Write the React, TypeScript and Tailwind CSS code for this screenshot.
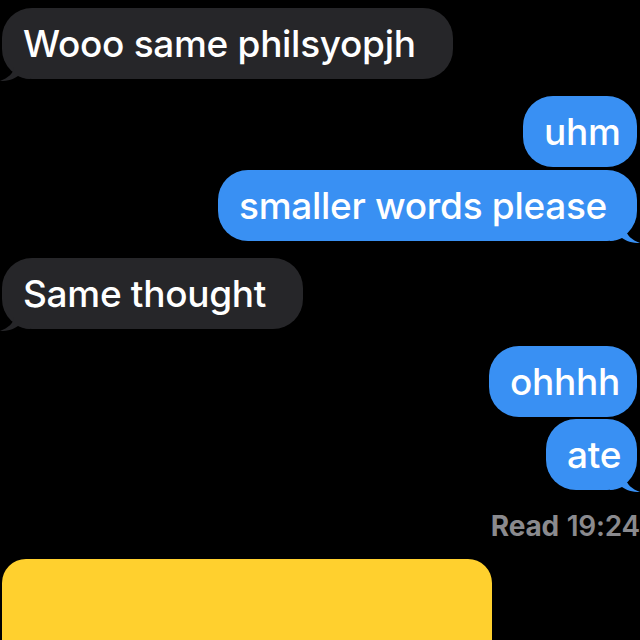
import React from "react";

const font = { fontFamily: "Inter, 'Liberation Sans', sans-serif" };

function LeftTail() {
  return (
    <svg className="absolute left-[-2px] bottom-[-2px]" width="30" height="24" viewBox="0 0 30 24">
      <path d="M14 0 L14 10 C14 16 8 21 0 24 C8 24 14 22 18 19 C22 21 26 22 30 22 L30 0 Z" fill="#262629" />
    </svg>
  );
}

function RightTail() {
  return (
    <svg className="absolute right-[-3px] bottom-[-2px]" width="30" height="24" viewBox="0 0 30 24">
      <path d="M16 0 L16 10 C16 16 22 21 30 24 C22 24 16 22 12 19 C8 21 4 22 0 22 L0 0 Z" fill="#3990f3" />
    </svg>
  );
}

function Gray({ text, w, mt }: { text: string; w: string; mt: string }) {
  return (
    <div className={`relative shrink-0 self-start ml-[2px] ${mt} ${w} h-[71px] rounded-[30px] bg-[#262629] flex items-center pl-[21px]`}>
      <LeftTail />
      <span className="relative text-white text-[37px] font-medium leading-none tracking-[-0.3px]">{text}</span>
    </div>
  );
}

function Blue({ text, w, mt, tail }: { text: string; w: string; mt: string; tail?: boolean }) {
  return (
    <div className={`relative shrink-0 self-end mr-[3px] ${mt} ${w} h-[71px] rounded-[30px] bg-[#3990f3] flex items-center pl-[21px]`}>
      {tail && <RightTail />}
      <span className="relative text-white text-[37px] font-medium leading-none tracking-[-0.3px]">{text}</span>
    </div>
  );
}

export default function App() {
  return (
    <div className="w-[640px] h-[640px] bg-black overflow-hidden flex flex-col" style={font}>
      <Gray text="Wooo same philsyopjh" w="w-[451px]" mt="mt-[8px]" />
      <Blue text="uhm" w="w-[114px]" mt="mt-[17px]" />
      <Blue text="smaller words please" w="w-[419px]" mt="mt-[3px]" tail />
      <Gray text="Same thought" w="w-[301px]" mt="mt-[17px]" />
      <Blue text="ohhhh" w="w-[148px]" mt="mt-[17px]" />
      <Blue text="ate" w="w-[91px]" mt="mt-[2px]" tail />
      <div className="shrink-0 self-end mt-[20px] text-[28px] leading-[32px] text-[#8a8a8e] whitespace-nowrap tracking-[-0.2px]">
        <span className="font-bold">Read</span> <span className="font-semibold">19:24</span>
      </div>
      <div className="ml-[2px] mt-[17px] w-[490px] h-[120px] shrink-0 rounded-t-[24px] bg-[#ffd02e]" />
    </div>
  );
}
